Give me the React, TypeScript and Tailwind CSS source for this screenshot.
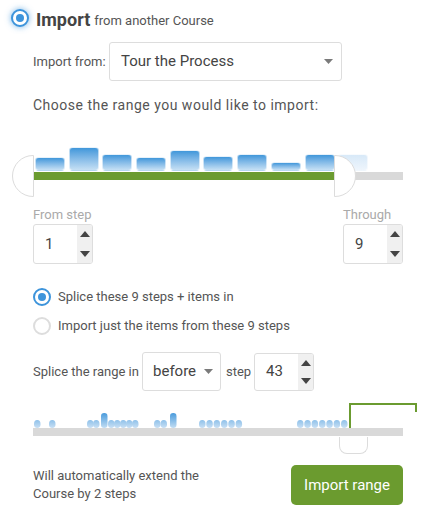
import React from 'react';

const blocks = [
  { h: 14 },
  { h: 24 },
  { h: 17 },
  { h: 14 },
  { h: 21 },
  { h: 15 },
  { h: 17 },
  { h: 9 },
  { h: 17 },
  { h: 17, faded: true },
];

// x offsets (relative to track start) of the step dots
const dots: { x: number; tall?: boolean }[] = [
  { x: 1 }, { x: 16 },
  { x: 54 }, { x: 60 }, { x: 68, tall: true }, { x: 75 }, { x: 81 }, { x: 87 }, { x: 93 }, { x: 99 },
  { x: 121 }, { x: 127.5 }, { x: 137, tall: true },
  { x: 166 }, { x: 173.3 }, { x: 180.6 }, { x: 188 }, { x: 195.3 }, { x: 202.6 },
  { x: 264 }, { x: 271.3 }, { x: 278.6 }, { x: 286 }, { x: 293.3 }, { x: 300.6 }, { x: 308 },
];

const Radio: React.FC<{ checked?: boolean; glow?: boolean }> = ({ checked, glow }) => (
  <span
    className={
      'flex h-[18px] w-[18px] shrink-0 items-center justify-center rounded-full border-2 bg-white ' +
      (checked ? 'border-[#3d94db] ' : 'border-[#dddddd] ') +
      (glow ? 'shadow-[0_0_6px_rgba(61,148,219,0.7)]' : '')
    }
  >
    {checked && <span className="h-[8px] w-[8px] rounded-full bg-[#3d94db]" />}
  </span>
);

const Caret: React.FC = () => (
  <svg width="9" height="5" viewBox="0 0 9 5">
    <path d="M0 0 H9 L4.5 5 Z" fill="#7a7a7a" />
  </svg>
);

const NumberInput: React.FC<{ value: string; h?: string }> = ({ value, h = 'h-[40px]' }) => (
  <div className={`flex w-[60px] ${h} overflow-hidden rounded-[3px] border border-[#dddddd] bg-white`}>
    <div className="flex flex-1 items-center pl-[11px] text-[15px] text-[#444]">{value}</div>
    <div className="flex w-[15px] flex-col items-center justify-between bg-[#f0f0f0] py-[6px]">
      <svg width="10" height="6" viewBox="0 0 10 6">
        <path d="M0 6 L5 0 L10 6 Z" fill="#444" />
      </svg>
      <svg width="10" height="6" viewBox="0 0 10 6">
        <path d="M0 0 H10 L5 6 Z" fill="#444" />
      </svg>
    </div>
  </div>
);

export default function App() {
  return (
    <div className="h-[514px] w-[424px] overflow-hidden bg-white text-[13px] text-[#555] [font-family:Roboto,'Liberation_Sans',sans-serif]">
      {/* Header */}
      <div className="flex h-[36px] items-center pl-[11px]">
        <Radio checked glow />
        <span className="ml-[7px] mt-[2px] text-[18px] font-bold text-[#444]">Import</span>
        <span className="ml-[4px] mt-[6px] text-[13px]">from another Course</span>
      </div>

      {/* Import from */}
      <div className="mt-[6px] flex items-center pl-[33px]">
        <span className="w-[76px]">Import from:</span>
        <div className="flex h-[39px] w-[233px] items-center justify-between rounded-[3px] border border-[#dddddd] pl-[11px] pr-[8px] text-[15px] text-[#444]">
          <span>Tour the Process</span>
          <Caret />
        </div>
      </div>

      <div className="mt-[16px] pl-[33px] text-[14px] leading-[16px] tracking-[0.5px]">
        Choose the range you would like to import:
      </div>

      {/* Range slider */}
      <div className="relative ml-[33px] mt-[34px] flex h-[50px] w-[370px] flex-col">
        <div className="flex h-[24px] items-end gap-[3.7px] pl-[2px]">
          {blocks.map((b, i) => (
            <div
              key={i}
              style={{ height: b.h }}
              className={
                'w-[30px] rounded-[4px] border border-white/60 ' +
                (b.faded
                  ? 'bg-gradient-to-b from-[#d8e9f8] to-[#eef5fc]'
                  : 'bg-gradient-to-b from-[#3f97da] to-[#c6e0f4]')
              }
            />
          ))}
        </div>
        <div className="mt-[1px] flex h-[8px]">
          <div className="w-[301px] bg-[#6b9b30]" />
          <div className="flex-1 bg-[#d9d9d9]" />
        </div>
        <div className="absolute left-[-21px] top-[8px] h-[42px] w-[22px] rounded-l-full border border-[#dcdcdc] bg-white" />
        <div className="absolute left-[301px] top-[8px] h-[42px] w-[22px] rounded-r-full border border-[#dcdcdc] bg-white" />
      </div>

      {/* From / Through */}
      <div className="mt-[10px] flex justify-between pl-[33px] pr-[21px]">
        <div>
          <div className="mb-[1px] leading-[16px] text-[#aaaaaa]">From step</div>
          <NumberInput value="1" />
        </div>
        <div>
          <div className="mb-[1px] leading-[16px] text-[#aaaaaa]">Through</div>
          <NumberInput value="9" />
        </div>
      </div>

      {/* Options */}
      <div className="mt-[24px] flex flex-col gap-[11px] pl-[33px]">
        <label className="flex h-[18px] items-center gap-[7px]">
          <Radio checked />
          <span>Splice these 9 steps + items in</span>
        </label>
        <label className="flex h-[18px] items-center gap-[7px]">
          <Radio />
          <span>Import just the items from these 9 steps</span>
        </label>
      </div>

      {/* Splice position */}
      <div className="mt-[17px] flex items-center pl-[33px]">
        <span className="w-[109px]">Splice the range in</span>
        <div className="flex h-[39px] w-[79px] items-center justify-between rounded-[3px] border border-[#dddddd] pl-[10px] pr-[7px] text-[15px] text-[#444]">
          <span>before</span>
          <Caret />
        </div>
        <span className="ml-[5px] w-[28px]">step</span>
        <NumberInput value="43" h="h-[38px]" />
      </div>

      {/* Steps of target course */}
      <div className="relative ml-[33px] mt-[12px] flex h-[50px] w-[370px] flex-col pt-[25px]">
        <svg className="absolute left-0 top-0" width="370" height="25" viewBox="0 0 370 25">
          <defs>
            <linearGradient id="dot" x1="0" y1="0" x2="0" y2="1">
              <stop offset="0" stopColor="#8fc1ea" />
              <stop offset="1" stopColor="#c9e0f4" />
            </linearGradient>
            <linearGradient id="dotTall" x1="0" y1="0" x2="0" y2="1">
              <stop offset="0" stopColor="#4a9bdc" />
              <stop offset="1" stopColor="#c2ddf3" />
            </linearGradient>
          </defs>
          {dots.map((d, i) =>
            d.tall ? (
              <rect key={i} x={d.x} y={10} width={6.5} height={15} rx={3.2} fill="url(#dotTall)" />
            ) : (
              <rect key={i} x={d.x} y={17} width={6.5} height={8} rx={3.2} ry={3.8} fill="url(#dot)" />
            )
          )}
        </svg>
        <div className="absolute left-[316px] top-0 h-[25px] w-[67px] border-l-2 border-t-2 border-[#6b9b30]" />
        <div className="absolute left-[382px] top-0 h-[9px] w-[2px] bg-[#6b9b30]" />
        <div className="h-[8px] bg-[#d9d9d9]" />
        <div className="absolute left-[306px] top-[34px] h-[17px] w-[29px] rounded-b-[8px] border border-t-0 border-[#dcdcdc] bg-white" />
      </div>

      {/* Footer */}
      <div className="mt-[12px] flex items-center justify-between pl-[33px] pr-[21px]">
        <div className="leading-[18px]">
          Will automatically extend the
          <br />
          Course by 2 steps
        </div>
        <button className="h-[40px] w-[112px] rounded-[5px] bg-[#6b9b2f] text-[15px] text-white">
          Import range
        </button>
      </div>
    </div>
  );
}
